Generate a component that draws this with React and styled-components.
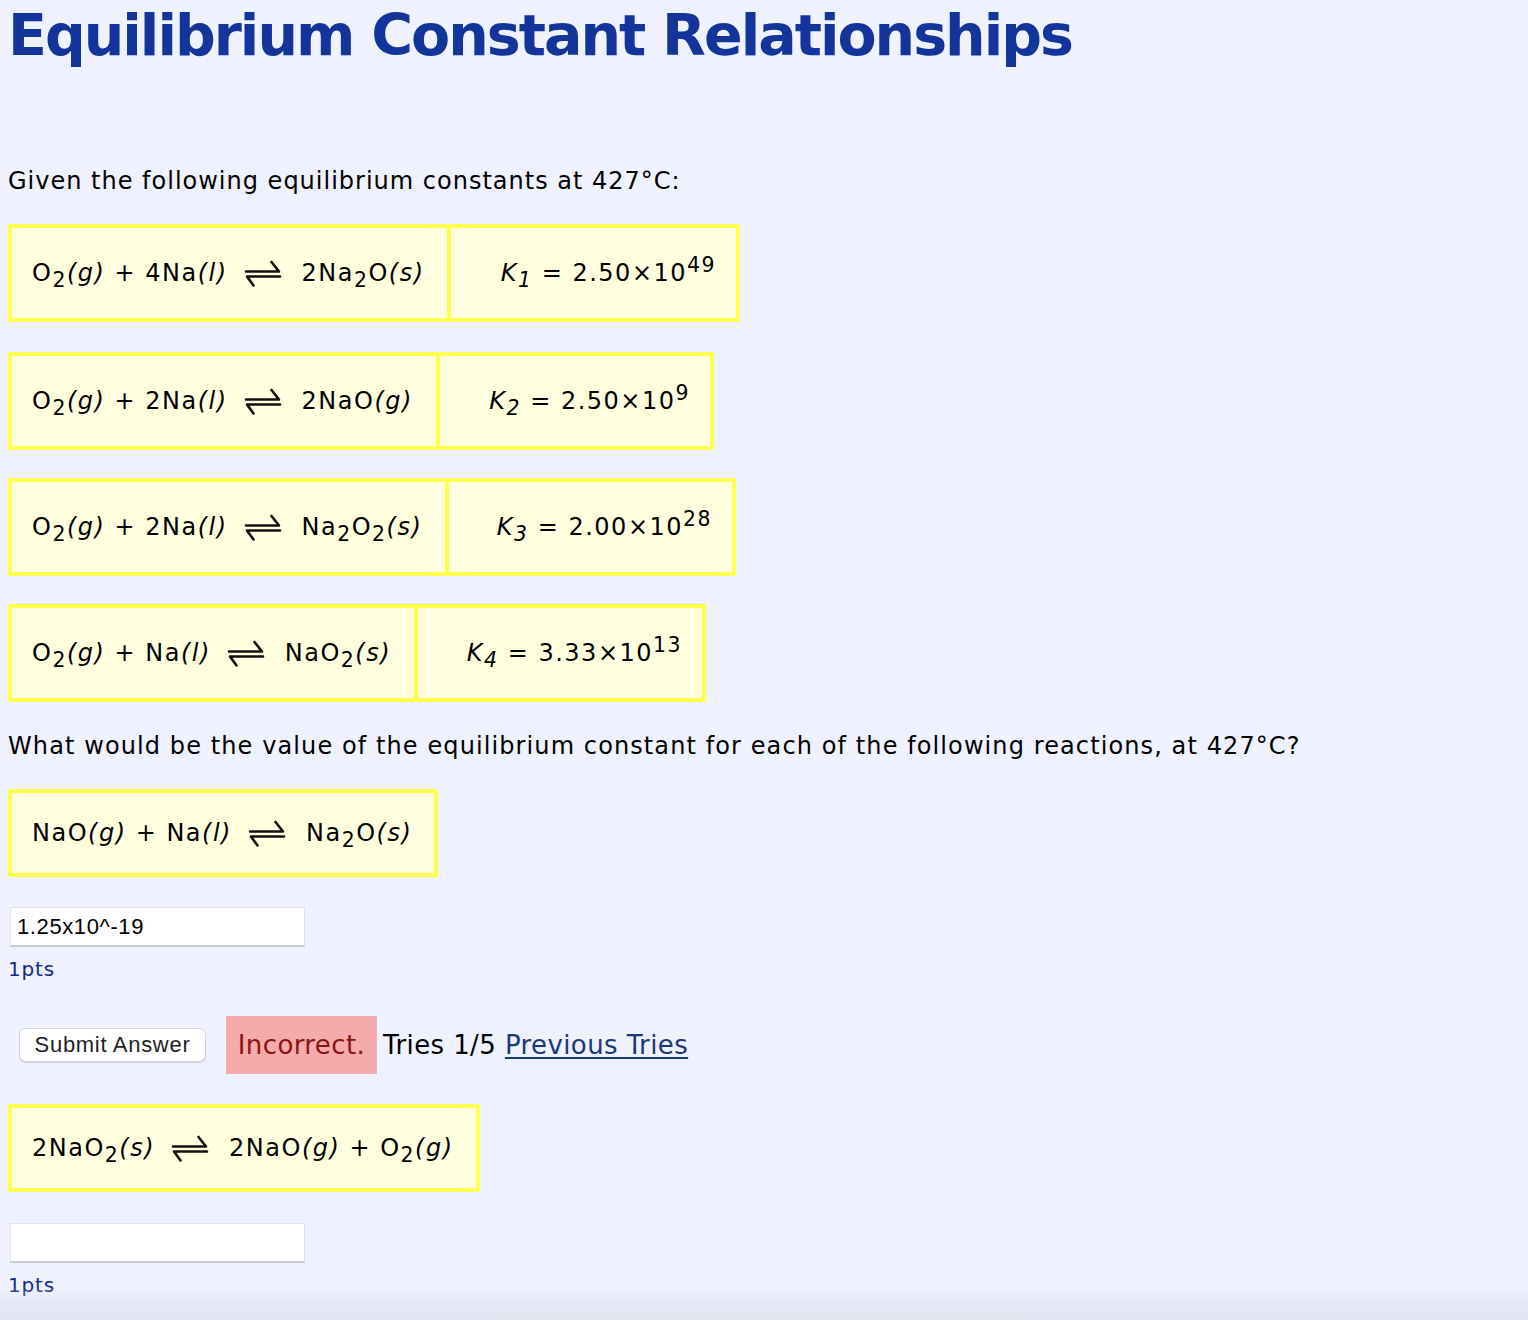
import React from "react";
import styled, { createGlobalStyle } from "styled-components";

const GlobalStyle = createGlobalStyle`
  html, body {
    margin: 0;
    padding: 0;
    background: #eff1fe;
  }
  body {
    font-family: "DejaVu Sans", Verdana, sans-serif;
    color: #000;
  }
`;

const Page = styled.div`
  padding: 0 8px 40px 8px;
  min-height: 1320px;
  box-sizing: border-box;
`;

const Title = styled.h1`
  margin: 0;
  font-size: 57px;
  line-height: 70px;
  font-weight: bold;
  color: #13349a;
  letter-spacing: -2px;
`;

const Prompt = styled.p`
  margin: ${(p) => p.$top}px 0 0 0;
  font-size: 24px;
  line-height: 30px;
  letter-spacing: ${(p) => p.$ls || 1}px;
`;

const Reaction = styled.div`
  display: flex;
  width: fit-content;
  margin-top: ${(p) => p.$top}px;
  border: 4px solid #ffff4d;
  background: #ffffe0;
`;

const Cell = styled.div`
  box-sizing: border-box;
  width: ${(p) => p.$w}px;
  padding: ${(p) => p.$py}px 20px;
  padding-left: ${(p) => (p.$right ? 40 : 20)}px;
  text-align: ${(p) => (p.$right ? "right" : "left")};
  font-size: 24px;
  line-height: 30px;
  height: ${(p) => p.$py * 2 + 30}px;
  letter-spacing: 1.5px;
  white-space: nowrap;
  & + & {
    border-left: 4px solid #ffff4d;
  }
`;

const Sub = styled.sub`
  font-size: 0.85em;
  line-height: 0;
  vertical-align: -0.3em;
`;

const Sup = styled.sup`
  font-size: 0.85em;
  line-height: 0;
  vertical-align: 0.45em;
`;

const Ph = styled.i`
  font-style: italic;
`;

const ArrowSvg = styled.svg`
  display: inline-block;
  vertical-align: -8px;
  margin: 0 20px 0 16px;
`;

const Arrow = () => (
  <ArrowSvg width="38" height="30" viewBox="0 0 38 30">
    <g stroke="#111" strokeWidth="2.6" fill="none" strokeLinecap="round" strokeLinejoin="round">
      <path d="M2 12.5 H35 L27.5 3" />
      <path d="M36 17.5 H3 L9.5 26.5" />
    </g>
  </ArrowSvg>
);

const AnswerInput = styled.input`
  display: block;
  box-sizing: border-box;
  margin: ${(p) => p.$top}px 0 0 2px;
  width: 295px;
  height: 40px;
  border: 1px solid #e2e3ea;
  border-bottom: 2px solid #c9cad2;
  background: #fff;
  padding: 0 6px;
  font-family: "Liberation Sans", Arial, sans-serif;
  font-size: 22px;
  letter-spacing: 0.6px;
  color: #000;
  outline: none;
`;

const Points = styled.div`
  margin-top: 10px;
  font-size: 20px;
  line-height: 24px;
  letter-spacing: 0.8px;
  color: #15298c;
`;

const SubmitRow = styled.div`
  display: flex;
  align-items: center;
  margin-top: 35px;
  font-size: 26px;
  letter-spacing: 0.4px;
  height: 58px;
`;

const SubmitButton = styled.button`
  margin-left: 11px;
  height: 34px;
  width: 187px;
  background: #fff;
  border: 1px solid #d4d4d8;
  border-radius: 7px;
  box-shadow: 0 1px 1px rgba(0, 0, 0, 0.15);
  font-family: "Liberation Sans", Arial, sans-serif;
  font-size: 22px;
  letter-spacing: 0.7px;
  color: #222;
  padding: 0;
`;

const Verdict = styled.span`
  margin-left: 20px;
  height: 58px;
  width: 151px;
  box-sizing: border-box;
  display: flex;
  align-items: center;
  justify-content: center;
  background: #f4abab;
  color: #8a1414;
`;

const Tries = styled.span`
  margin-left: 6px;
`;

const PrevLink = styled.a`
  color: #1a3a7a;
  text-decoration: underline;
  text-underline-offset: 3px;
  text-decoration-thickness: 2px;
`;

const BottomShade = styled.div`
  position: fixed;
  left: 0;
  right: 0;
  bottom: 0;
  height: 34px;
  background: linear-gradient(to bottom, rgba(222, 224, 236, 0), rgba(222, 224, 236, 0.85));
  pointer-events: none;
`;

const O2 = () => (
  <>
    O<Sub>2</Sub>
  </>
);

const givens = [
  {
    top: 28,
    w: [435, 289],
    lhs: (
      <>
        <O2 />
        <Ph>(g)</Ph> + 4Na<Ph>(l)</Ph>
      </>
    ),
    rhs: (
      <>
        2Na<Sub>2</Sub>O<Ph>(s)</Ph>
      </>
    ),
    k: "1",
    val: "2.50",
    exp: "49",
  },
  {
    top: 30,
    w: [424, 274],
    lhs: (
      <>
        <O2 />
        <Ph>(g)</Ph> + 2Na<Ph>(l)</Ph>
      </>
    ),
    rhs: (
      <>
        2NaO<Ph>(g)</Ph>
      </>
    ),
    k: "2",
    val: "2.50",
    exp: "9",
  },
  {
    top: 28,
    w: [433, 287],
    lhs: (
      <>
        <O2 />
        <Ph>(g)</Ph> + 2Na<Ph>(l)</Ph>
      </>
    ),
    rhs: (
      <>
        Na<Sub>2</Sub>O<Sub>2</Sub>
        <Ph>(s)</Ph>
      </>
    ),
    k: "3",
    val: "2.00",
    exp: "28",
  },
  {
    top: 28,
    w: [402, 288],
    lhs: (
      <>
        <O2 />
        <Ph>(g)</Ph> + Na<Ph>(l)</Ph>
      </>
    ),
    rhs: (
      <>
        NaO<Sub>2</Sub>
        <Ph>(s)</Ph>
      </>
    ),
    k: "4",
    val: "3.33",
    exp: "13",
  },
];

const App = () => {
  return (
    <Page>
      <GlobalStyle />
      <Title>Equilibrium Constant Relationships</Title>
      <Prompt $top={96}>Given the following equilibrium constants at 427°C:</Prompt>

      {givens.map((g, i) => (
        <Reaction key={i} $top={g.top}>
          <Cell $w={g.w[0]} $py={30}>
            {g.lhs}
            <Arrow />
            {g.rhs}
          </Cell>
          <Cell $w={g.w[1]} $py={30} $right>
            <Ph>
              K<Sub>{g.k}</Sub>
            </Ph>{" "}
            = {g.val}×10<Sup>{g.exp}</Sup>
          </Cell>
        </Reaction>
      ))}

      <Prompt $top={29} $ls={1.1}>
        What would be the value of the equilibrium constant for each of the following reactions, at 427°C?
      </Prompt>

      <Reaction $top={28}>
        <Cell $w={422} $py={25}>
          NaO<Ph>(g)</Ph> + Na<Ph>(l)</Ph>
          <Arrow />
          Na<Sub>2</Sub>O<Ph>(s)</Ph>
        </Cell>
      </Reaction>
      <AnswerInput $top={30} defaultValue="1.25x10^-19" />
      <Points>1pts</Points>

      <SubmitRow>
        <SubmitButton>Submit Answer</SubmitButton>
        <Verdict>Incorrect.</Verdict>
        <Tries>
          Tries 1/5 <PrevLink href="#">Previous Tries</PrevLink>
        </Tries>
      </SubmitRow>

      <Reaction $top={30}>
        <Cell $w={464} $py={25}>
          2NaO<Sub>2</Sub>
          <Ph>(s)</Ph>
          <Arrow />
          2NaO<Ph>(g)</Ph> + <O2 />
          <Ph>(g)</Ph>
        </Cell>
      </Reaction>
      <AnswerInput $top={31} defaultValue="" />
      <Points>1pts</Points>
      <BottomShade />
    </Page>
  );
};

export default App;
